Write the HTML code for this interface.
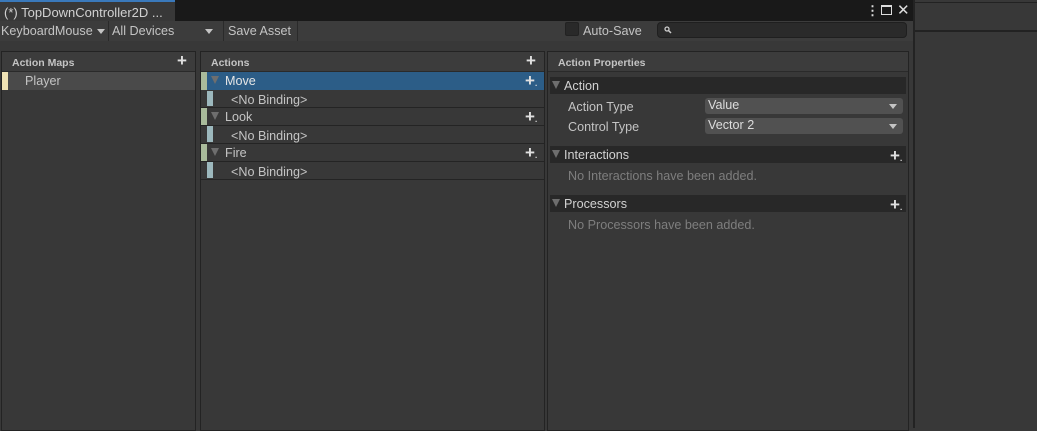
<!DOCTYPE html><html><head><style>
*{box-sizing:border-box;margin:0;padding:0}
body{width:1037px;height:428px;background:#383838;font-family:"Liberation Sans",sans-serif;font-size:12.6px;color:#c4c4c4;position:relative;overflow:hidden}
.a{position:absolute}
.plus{position:absolute;font-size:17px;color:#e0e0e0;line-height:1;font-weight:bold}
.tri{display:inline-block;width:0;height:0;border-left:4.5px solid transparent;border-right:4.5px solid transparent;border-top:8px solid #6e6e6e;margin-right:6px;vertical-align:1px}
.dd{border-left:4px solid transparent;border-right:4px solid transparent;border-top:5px solid #c4c4c4;position:absolute}
</style></head><body>
<div class="a" style="left:0;top:0;width:913px;height:21px;background:#191919"></div>
<div class="a" style="left:0;top:0;width:175px;height:21px;background:#383838;border-top:2px solid #3a79bb;padding:3px 0 0 4px;color:#d2d2d2;font-size:13px">(*) TopDownController2D ...</div>
<div class="a" style="left:866px;top:3px;color:#ddd;font-weight:bold;font-size:13px">⋮</div>
<div class="a" style="left:881px;top:5px;width:11px;height:10px;border:1px solid #ddd;border-top-width:2px"></div>
<div class="a" style="left:897px;top:1px;color:#ddd;font-size:15px">✕</div>
<div class="a" style="left:913px;top:0;width:2px;height:428px;background:#232323"></div>
<div class="a" style="left:915px;top:2px;width:122px;height:1px;background:#222"></div>
<div class="a" style="left:915px;top:30px;width:122px;height:2px;background:#222"></div>
<div class="a" style="left:0;top:21px;width:913px;height:20px;background:#3c3c3c"></div>
<div class="a" style="left:1px;top:24px">KeyboardMouse</div><div class="dd" style="left:97px;top:29px"></div>
<div class="a" style="left:108px;top:21px;width:1px;height:20px;background:#2a2a2a"></div>
<div class="a" style="left:112px;top:24px">All Devices</div><div class="dd" style="left:205px;top:29px"></div>
<div class="a" style="left:223px;top:21px;width:1px;height:20px;background:#2a2a2a"></div>
<div class="a" style="left:228px;top:24px">Save Asset</div>
<div class="a" style="left:297px;top:21px;width:1px;height:20px;background:#2a2a2a"></div>
<div class="a" style="left:565px;top:22px;width:14px;height:14px;background:#292929;border:1px solid #222;border-radius:2px"></div>
<div class="a" style="left:583px;top:24px">Auto-Save</div>
<div class="a" style="left:657px;top:22px;width:250px;height:16px;background:#2a2a2a;border:1px solid #1f1f1f;border-radius:4px"><svg style="position:absolute;left:6px;top:3px" width="8" height="8"><circle cx="3" cy="3" r="2" stroke="#ccc" fill="none" stroke-width="1.3"/><line x1="4.5" y1="4.5" x2="7" y2="7" stroke="#ccc" stroke-width="1.5"/></svg></div>
<div class="a" style="left:1px;top:51px;width:195px;height:380px;border:1px solid #232323;background:#383838"></div>
<div class="a" style="left:2px;top:52px;width:193px;height:20px;background:#3c3c3c;border-bottom:1px solid #2a2a2a;padding:5px 10px;font-weight:bold;font-size:10.5px">Action Maps</div>
<div class="plus" style="left:177px;top:52px">+</div>
<div class="a" style="left:2px;top:72px;width:193px;height:18px;background:#4a4a4a"></div>
<div class="a" style="left:2px;top:72px;width:6px;height:18px;background:#efe2b4"></div>
<div class="a" style="left:25px;top:74px">Player</div>

<div class="a" style="left:200px;top:51px;width:345px;height:380px;border:1px solid #232323"></div>
<div class="a" style="left:201px;top:52px;width:343px;height:20px;background:#3c3c3c;border-bottom:1px solid #2a2a2a;padding:5px 10px;font-weight:bold;font-size:10.5px">Actions</div>
<div class="plus" style="left:526px;top:52px">+</div>
<div class="a" style="left:201px;top:72px;width:343px;height:18px;background:#2c5d87"></div>
<div class="a" style="left:201px;top:72px;width:6px;height:18px;background:#a9bb9b"></div>
<div class="a" style="left:211px;top:74px;color:#e6e6e6"><span class="tri"></span>Move</div>
<div class="plus" style="left:525px;top:72px">+<span style="font-size:8px">.</span></div>
<div class="a" style="left:201px;top:107px;width:343px;height:1px;background:#242424"></div>
<div class="a" style="left:207px;top:91px;width:6px;height:15px;background:#9cb8bd"></div>
<div class="a" style="left:231px;top:93px">&lt;No Binding&gt;</div>
<div class="a" style="left:201px;top:108px;width:6px;height:17px;background:#a9bb9b"></div>
<div class="a" style="left:211px;top:110px"><span class="tri"></span>Look</div>
<div class="plus" style="left:525px;top:108px">+<span style="font-size:8px">.</span></div>
<div class="a" style="left:201px;top:125px;width:343px;height:1px;background:#242424"></div>
<div class="a" style="left:207px;top:126px;width:6px;height:16px;background:#9cb8bd"></div>
<div class="a" style="left:231px;top:129px">&lt;No Binding&gt;</div>
<div class="a" style="left:201px;top:143px;width:343px;height:1px;background:#242424"></div>
<div class="a" style="left:201px;top:144px;width:6px;height:17px;background:#a9bb9b"></div>
<div class="a" style="left:211px;top:146px"><span class="tri"></span>Fire</div>
<div class="plus" style="left:525px;top:144px">+<span style="font-size:8px">.</span></div>
<div class="a" style="left:201px;top:161px;width:343px;height:1px;background:#242424"></div>
<div class="a" style="left:207px;top:162px;width:6px;height:16px;background:#9cb8bd"></div>
<div class="a" style="left:231px;top:165px">&lt;No Binding&gt;</div>
<div class="a" style="left:201px;top:179px;width:343px;height:1px;background:#242424"></div>

<div class="a" style="left:547px;top:51px;width:362px;height:380px;border:1px solid #232323"></div>
<div class="a" style="left:548px;top:52px;width:360px;height:20px;background:#3c3c3c;border-bottom:1px solid #2a2a2a;padding:5px 10px;font-weight:bold;font-size:10.5px">Action Properties</div>
<div class="a" style="left:550px;top:77px;width:356px;height:17px;background:#282828;padding:2px 2px;color:#d2d2d2"><span class="tri" style="margin-right:4px"></span>Action</div>
<div class="a" style="left:568px;top:100px">Action Type</div>
<div class="a" style="left:705px;top:98px;width:198px;height:16px;background:#515151;border-radius:3px;padding:0 3px;color:#ddd">Value</div><div class="dd" style="left:889px;top:104px"></div>
<div class="a" style="left:568px;top:120px">Control Type</div>
<div class="a" style="left:705px;top:118px;width:198px;height:16px;background:#515151;border-radius:3px;padding:0 3px;color:#ddd">Vector 2</div><div class="dd" style="left:889px;top:124px"></div>
<div class="a" style="left:550px;top:146px;width:356px;height:17px;background:#282828;padding:2px 2px;color:#d2d2d2"><span class="tri" style="margin-right:4px"></span>Interactions</div>
<div class="plus" style="left:890px;top:147px">+<span style="font-size:8px">.</span></div>
<div class="a" style="left:568px;top:169px;color:#7e7e7e">No Interactions have been added.</div>
<div class="a" style="left:550px;top:195px;width:356px;height:17px;background:#282828;padding:2px 2px;color:#d2d2d2"><span class="tri" style="margin-right:4px"></span>Processors</div>
<div class="plus" style="left:890px;top:196px">+<span style="font-size:8px">.</span></div>
<div class="a" style="left:568px;top:218px;color:#7e7e7e">No Processors have been added.</div>
</body></html>
